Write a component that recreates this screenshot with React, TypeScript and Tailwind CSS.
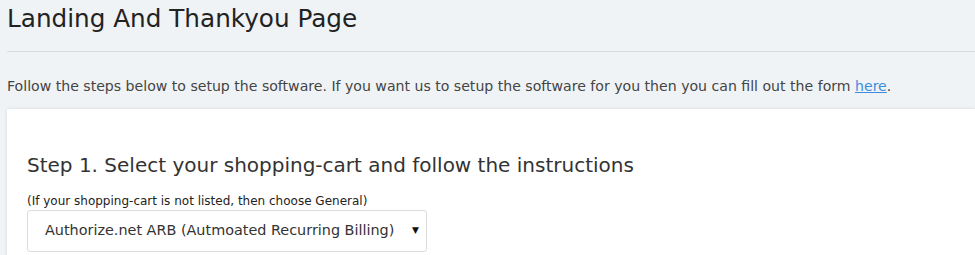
export default function App() {
    return (
        <div className="w-[975px] h-[255px] overflow-hidden bg-[#eff3f6] text-[#333] font-['DejaVu_Sans',sans-serif]">
            <div className="pl-[7px]">
                <h1 className="pt-[5px] text-[24.7px] leading-[27px] font-normal text-[#222]">Landing And Thankyou Page</h1>
                <div className="mt-[19px] border-t border-[#d9dcdf]"></div>
                <p className="mt-[26px] text-[14.1px] leading-[16px] text-[#444]">
                    Follow the steps below to setup the software. If you want us to setup the software for you then you can fill out the form{" "}
                    <a href="#" className="text-[#3c8dde] underline">here</a>.
                </p>
                <div className="mt-[15px] bg-white shadow-[0_0_3px_rgba(0,0,0,0.12)] pl-[20px] pt-[44px] h-[200px]">
                    <h2 className="text-[20px] leading-[24px] text-[#333]">Step 1. Select your shopping-cart and follow the instructions</h2>
                    <p className="mt-[17px] text-[12px] leading-[14px] text-[#222]">(If your shopping-cart is not listed, then choose General)</p>
                    <div className="mt-[2px] w-[400px] h-[42px] border border-[#dcdcdc] rounded-[3px] flex items-center pl-[17px] pr-[7px]">
                        <span className="text-[14.4px] text-[#333]">Authorize.net ARB (Autmoated Recurring Billing)</span>
                        <span className="ml-auto text-[9px] text-[#111]">▼</span>
                    </div>
                </div>
            </div>
        </div>
    );
}
